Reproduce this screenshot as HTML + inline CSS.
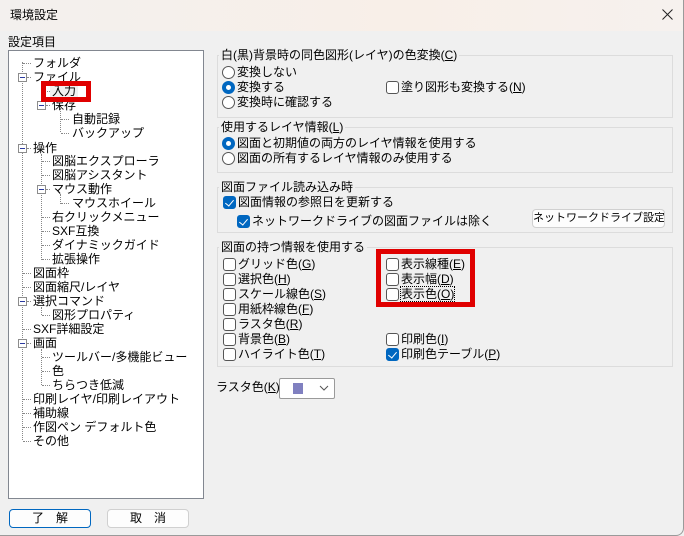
<!DOCTYPE html>
<html><head><meta charset="utf-8">
<style>
*{box-sizing:border-box;margin:0;padding:0}
body{width:684px;height:536px;overflow:hidden;background:#f0f0f0;font-family:"Liberation Sans","Noto Sans CJK JP",sans-serif;font-size:12px;color:#000;position:relative}
.a{position:absolute;white-space:nowrap;line-height:14px}
.title{position:absolute;left:0;top:0;width:684px;height:31px;background:linear-gradient(90deg,#f3f0ee,#f8efe8 60%,#f6f1ee);}
.win{position:absolute;left:0;top:0;width:684px;height:536px;border-right:1px solid #9a9a9a;border-bottom:1px solid #9a9a9a;border-radius:0 0 8px 0;pointer-events:none}
.tree{position:absolute;left:8px;top:50px;width:196px;height:449px;background:#fff;border:1px solid #828790}
.grp{position:absolute;border:1px solid #dcdcdc}
.gt{position:absolute;background:#f0f0f0;padding:0 2px;line-height:14px;white-space:nowrap}
.rb{position:absolute;width:13px;height:13px;border:1px solid #555;border-radius:50%;background:#fff}
.rb.on{background:#0067c0;border-color:#0067c0}
.rb.on::after{content:"";position:absolute;left:3px;top:3px;width:5px;height:5px;border-radius:50%;background:#fff}
.cb{position:absolute;width:13px;height:13px;border:1px solid #555;border-radius:3px;background:#fff}
.cb.on{background:#0067c0;border-color:#0067c0}
.cb.on::after{content:"";position:absolute;left:3px;top:1px;width:4px;height:7px;border:solid #fff;border-width:0 1.5px 1.5px 0;transform:rotate(40deg)}
.ex{position:absolute;width:9px;height:9px;border:1px solid #8c8c8c;background:#fff}
.ex::after{content:"";position:absolute;left:1px;top:3px;width:5px;height:1px;background:#2b3aa0}
.dh{position:absolute;border-top:1px dotted #888;height:0}
.dv{position:absolute;border-left:1px dotted #888;width:0}
.btn{position:absolute;background:#fdfdfd;border:1px solid #d0d0d0;border-radius:4px;text-align:center;line-height:17px;white-space:nowrap;overflow:hidden}
.red{position:absolute;border:5px solid #e00000}
u{text-decoration:underline}
</style></head><body>
<div class="title"></div>
<div class="a" style="left:10px;top:8px">環境設定</div>
<svg style="position:absolute;left:662px;top:9px" width="11" height="11"><path d="M0.5 0.5 L10.5 10.5 M10.5 0.5 L0.5 10.5" stroke="#222" stroke-width="1"/></svg>

<div class="a" style="left:8px;top:35px">設定項目</div>
<div class="tree"></div>
<div class="dv" style="left:22px;top:62px;height:378px"></div>
<div class="dv" style="left:41px;top:81px;height:23px"></div>
<div class="dv" style="left:60px;top:108px;height:24px"></div>
<div class="dv" style="left:41px;top:154px;height:106px"></div>
<div class="dv" style="left:60px;top:194px;height:10px"></div>
<div class="dv" style="left:41px;top:307px;height:8px"></div>
<div class="dv" style="left:41px;top:349px;height:36px"></div>

<div class="dh" style="left:23px;top:63px;width:8px"></div>
<div class="dh" style="left:27px;top:77px;width:4px"></div>
<div class="dh" style="left:42px;top:91px;width:8px"></div>
<div class="dh" style="left:46px;top:105px;width:4px"></div>
<div class="dh" style="left:61px;top:119px;width:8px"></div>
<div class="dh" style="left:61px;top:133px;width:8px"></div>
<div class="dh" style="left:27px;top:148px;width:4px"></div>
<div class="dh" style="left:42px;top:161px;width:8px"></div>
<div class="dh" style="left:42px;top:175px;width:8px"></div>
<div class="dh" style="left:46px;top:189px;width:4px"></div>
<div class="dh" style="left:61px;top:203px;width:8px"></div>
<div class="dh" style="left:42px;top:217px;width:8px"></div>
<div class="dh" style="left:42px;top:231px;width:8px"></div>
<div class="dh" style="left:42px;top:245px;width:8px"></div>
<div class="dh" style="left:42px;top:259px;width:8px"></div>
<div class="dh" style="left:23px;top:273px;width:8px"></div>
<div class="dh" style="left:23px;top:287px;width:8px"></div>
<div class="dh" style="left:27px;top:301px;width:4px"></div>
<div class="dh" style="left:42px;top:315px;width:8px"></div>
<div class="dh" style="left:23px;top:329px;width:8px"></div>
<div class="dh" style="left:27px;top:343px;width:4px"></div>
<div class="dh" style="left:42px;top:357px;width:8px"></div>
<div class="dh" style="left:42px;top:371px;width:8px"></div>
<div class="dh" style="left:42px;top:385px;width:8px"></div>
<div class="dh" style="left:23px;top:399px;width:8px"></div>
<div class="dh" style="left:23px;top:413px;width:8px"></div>
<div class="dh" style="left:23px;top:427px;width:8px"></div>
<div class="dh" style="left:23px;top:441px;width:8px"></div>

<div class="ex" style="left:18px;top:73px"></div>
<div class="ex" style="left:37px;top:101px"></div>
<div class="ex" style="left:18px;top:144px"></div>
<div class="ex" style="left:37px;top:185px"></div>
<div class="ex" style="left:18px;top:297px"></div>
<div class="ex" style="left:18px;top:339px"></div>

<div class="a" style="left:33px;top:56px">フォルダ</div>
<div class="a" style="left:33px;top:70px">ファイル</div>
<div class="a" style="left:50px;top:84px;background:#f0f0f0;padding:0 2px">入力</div>
<div class="a" style="left:52px;top:98px">保存</div>
<div class="a" style="left:72px;top:112px">自動記録</div>
<div class="a" style="left:72px;top:126px">バックアップ</div>
<div class="a" style="left:33px;top:141px">操作</div>
<div class="a" style="left:52px;top:154px">図脳エクスプローラ</div>
<div class="a" style="left:52px;top:168px">図脳アシスタント</div>
<div class="a" style="left:52px;top:182px">マウス動作</div>
<div class="a" style="left:72px;top:196px">マウスホイール</div>
<div class="a" style="left:52px;top:210px">右クリックメニュー</div>
<div class="a" style="left:52px;top:224px">SXF互換</div>
<div class="a" style="left:52px;top:238px">ダイナミックガイド</div>
<div class="a" style="left:52px;top:252px">拡張操作</div>
<div class="a" style="left:33px;top:266px">図面枠</div>
<div class="a" style="left:33px;top:280px">図面縮尺/レイヤ</div>
<div class="a" style="left:33px;top:294px">選択コマンド</div>
<div class="a" style="left:52px;top:308px">図形プロパティ</div>
<div class="a" style="left:33px;top:322px">SXF詳細設定</div>
<div class="a" style="left:33px;top:336px">画面</div>
<div class="a" style="left:52px;top:350px">ツールバー/多機能ビュー</div>
<div class="a" style="left:52px;top:364px">色</div>
<div class="a" style="left:52px;top:378px">ちらつき低減</div>
<div class="a" style="left:33px;top:392px">印刷レイヤ/印刷レイアウト</div>
<div class="a" style="left:33px;top:406px">補助線</div>
<div class="a" style="left:33px;top:420px">作図ペン デフォルト色</div>
<div class="a" style="left:33px;top:434px">その他</div>
<div class="red" style="left:41px;top:81px;width:50px;height:21px"></div>

<div class="btn" style="left:9px;top:509px;width:82px;height:19px;border-color:#0067c0">了　解</div>
<div class="btn" style="left:107px;top:509px;width:82px;height:19px">取　消</div>

<div class="grp" style="left:217px;top:55px;width:456px;height:63px"></div>
<div class="gt" style="left:219px;top:48px">白(黒)背景時の同色図形(レイヤ)の色変換(<u>C</u>)</div>
<div class="rb" style="left:222px;top:66px"></div><div class="a" style="left:237px;top:65px">変換しない</div>
<div class="rb on" style="left:222px;top:81px"></div><div class="a" style="left:237px;top:80px">変換する</div>
<div class="rb" style="left:222px;top:96px"></div><div class="a" style="left:237px;top:95px">変換時に確認する</div>
<div class="cb" style="left:386px;top:81px"></div><div class="a" style="left:401px;top:80px">塗り図形も変換する(<u>N</u>)</div>

<div class="grp" style="left:217px;top:127px;width:456px;height:46px"></div>
<div class="gt" style="left:219px;top:120px">使用するレイヤ情報(<u>L</u>)</div>
<div class="rb on" style="left:222px;top:137px"></div><div class="a" style="left:237px;top:136px">図面と初期値の両方のレイヤ情報を使用する</div>
<div class="rb" style="left:222px;top:152px"></div><div class="a" style="left:237px;top:151px">図面の所有するレイヤ情報のみ使用する</div>

<div class="grp" style="left:217px;top:187px;width:456px;height:46px"></div>
<div class="gt" style="left:219px;top:180px">図面ファイル読み込み時</div>
<div class="cb on" style="left:223px;top:196px"></div><div class="a" style="left:238px;top:195px">図面情報の参照日を更新する</div>
<div class="cb on" style="left:237px;top:215px"></div><div class="a" style="left:252px;top:214px">ネットワークドライブの図面ファイルは除く</div>
<div class="btn" style="left:532px;top:209px;width:133px;height:19px;font-size:11px">ネットワークドライブ設定</div>

<div class="grp" style="left:217px;top:247px;width:456px;height:120px"></div>
<div class="gt" style="left:219px;top:240px">図面の持つ情報を使用する</div>
<div class="cb" style="left:223px;top:258px"></div><div class="a" style="left:238px;top:257px">グリッド色(<u>G</u>)</div>
<div class="cb" style="left:223px;top:273px"></div><div class="a" style="left:238px;top:272px">選択色(<u>H</u>)</div>
<div class="cb" style="left:223px;top:288px"></div><div class="a" style="left:238px;top:287px">スケール線色(<u>S</u>)</div>
<div class="cb" style="left:223px;top:303px"></div><div class="a" style="left:238px;top:302px">用紙枠線色(<u>F</u>)</div>
<div class="cb" style="left:223px;top:318px"></div><div class="a" style="left:238px;top:317px">ラスタ色(<u>R</u>)</div>
<div class="cb" style="left:223px;top:333px"></div><div class="a" style="left:238px;top:332px">背景色(<u>B</u>)</div>
<div class="cb" style="left:223px;top:348px"></div><div class="a" style="left:238px;top:347px">ハイライト色(<u>T</u>)</div>
<div class="cb" style="left:386px;top:258px"></div><div class="a" style="left:401px;top:257px">表示線種(<u>E</u>)</div>
<div class="cb" style="left:386px;top:273px"></div><div class="a" style="left:401px;top:272px">表示幅(<u>D</u>)</div>
<div class="cb" style="left:386px;top:288px"></div><div class="a" style="left:401px;top:287px;outline:1px dotted #000">表示色(<u>O</u>)</div>
<div class="cb" style="left:386px;top:333px"></div><div class="a" style="left:401px;top:332px">印刷色(<u>I</u>)</div>
<div class="cb on" style="left:386px;top:348px"></div><div class="a" style="left:401px;top:347px">印刷色テーブル(<u>P</u>)</div>
<div class="red" style="left:376px;top:249px;width:99px;height:58px"></div>

<div class="a" style="left:216px;top:380px">ラスタ色(<u>K</u>)</div>
<div style="position:absolute;left:279px;top:378px;width:56px;height:21px;background:#fff;border:1px solid #9a9a9a;border-radius:2px"></div>
<div style="position:absolute;left:293px;top:383px;width:10px;height:11px;background:#8080c0"></div>
<svg style="position:absolute;left:319px;top:385px" width="10" height="6"><path d="M1 1 L5 5 L9 1" fill="none" stroke="#555" stroke-width="1"/></svg>

<div class="win"></div>
</body></html>
